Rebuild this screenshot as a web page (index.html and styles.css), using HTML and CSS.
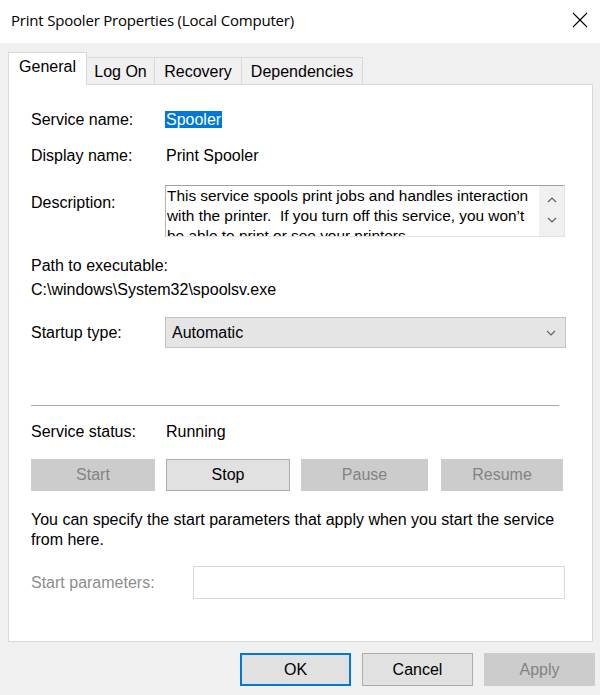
FILE: index.html
```html
<!DOCTYPE html>
<html lang="en">
<head>
  <meta charset="UTF-8">
  <title>Print Spooler Properties (Local Computer)</title>
  <link rel="stylesheet" href="styles.css">
</head>
<body>
  <div class="dialog">
    <div class="titlebar">
      <span class="title">Print Spooler Properties (Local Computer)</span>
      <svg class="close" width="16" height="16" viewBox="0 0 16 16">
        <path d="M1 1 L15 15 M15 1 L1 15" stroke="#000" stroke-width="1.1" fill="none"/>
      </svg>
    </div>

    <div class="tabs">
      <div class="tab active">General</div>
      <div class="tab">Log On</div>
      <div class="tab">Recovery</div>
      <div class="tab">Dependencies</div>
    </div>

    <div class="panel">
      <div class="row first">
        <span class="label">Service name:</span>
        <span class="value"><span class="selected">Spooler</span></span>
      </div>

      <div class="row gap-16">
        <span class="label">Display name:</span>
        <span class="value">Print Spooler</span>
      </div>

      <div class="row top gap-19">
        <span class="label desc-label">Description:</span>
        <div class="textbox">
          <div class="textbox-text">
            This service spools print jobs and handles interaction<br>
            with the printer.&nbsp; If you turn off this service, you won’t<br>
            be able to print or see your printers.
          </div>
          <div class="scrollbar">
            <svg width="10" height="6" viewBox="0 0 10 6"><path d="M1 5 L5 1 L9 5" stroke="#606060" stroke-width="1.2" fill="none"/></svg>
            <svg width="10" height="6" viewBox="0 0 10 6"><path d="M1 1 L5 5 L9 1" stroke="#606060" stroke-width="1.2" fill="none"/></svg>
          </div>
        </div>
      </div>

      <div class="line gap-19">Path to executable:</div>
      <div class="line gap-4">C:\windows\System32\spoolsv.exe</div>

      <div class="row gap-17">
        <span class="label">Startup type:</span>
        <div class="select">
          <span>Automatic</span>
          <svg width="10" height="6" viewBox="0 0 10 6"><path d="M1 1 L5 5 L9 1" stroke="#606060" stroke-width="1.1" fill="none"/></svg>
        </div>
      </div>

      <div class="separator"></div>

      <div class="row gap-16">
        <span class="label">Service status:</span>
        <span class="value">Running</span>
      </div>

      <div class="service-buttons">
        <button class="btn disabled">Start</button>
        <button class="btn">Stop</button>
        <button class="btn disabled">Pause</button>
        <button class="btn disabled resume">Resume</button>
      </div>

      <p class="hint">You can specify the start parameters that apply when you start the service<br>from here.</p>

      <div class="row params">
        <span class="label label-wide muted">Start parameters:</span>
        <div class="input"></div>
      </div>
    </div>

    <div class="footer">
      <button class="btn footer-btn default">OK</button>
      <button class="btn footer-btn">Cancel</button>
      <button class="btn footer-btn disabled">Apply</button>
    </div>
  </div>
</body>
</html>
```

FILE: styles.css
```css
* {
  margin: 0;
  padding: 0;
  box-sizing: border-box;
}

body {
  width: 600px;
  height: 695px;
  overflow: hidden;
  background: #f0f0f0;
  font-family: "Liberation Sans", Arial, sans-serif;
  font-size: 16px;
  color: #000;
}

.titlebar {
  height: 43px;
  background: #fff;
  display: flex;
  align-items: center;
  justify-content: space-between;
  padding: 0 12px 3px 11px;
}

.title {
  font-family: "Open Sans", "Noto Sans", sans-serif;
  font-size: 15px;
  letter-spacing: -0.2px;
}

.tabs {
  display: flex;
  align-items: flex-end;
  height: 41px;
  padding-left: 8px;
  position: relative;
  z-index: 1;
}

.tab {
  height: 27px;
  line-height: 27px;
  border: 1px solid #d9d9d9;
  border-bottom: none;
  border-left: none;
  background: #f0f0f0;
  text-align: center;
}

.tab.active {
  width: 79px;
  height: 33px;
  line-height: 28px;
  border-left: 1px solid #d9d9d9;
  background: #fff;
  margin-bottom: -1px;
}

.tabs .tab:nth-child(2) { width: 68px; }
.tabs .tab:nth-child(3) { width: 87px; }
.tabs .tab:nth-child(4) { width: 121px; }

.panel {
  width: 585px;
  height: 558px;
  margin-left: 8px;
  background: #fff;
  border: 1px solid #d9d9d9;
  padding: 25px 26px 0 22px;
}

.row {
  display: flex;
  align-items: center;
  line-height: 20px;
}

.row.top {
  align-items: flex-start;
}

.label {
  width: 134px;
  flex-shrink: 0;
}

.label-wide {
  width: 162px;
}

.muted {
  color: #8d8d8d;
}

.value {
  padding-left: 1px;
}

.selected {
  background: #0078d7;
  color: #fff;
  margin-left: -1px;
  padding: 0 1px;
}

.gap-4 { margin-top: 4px; }
.gap-16 { margin-top: 16px; }
.gap-17 { margin-top: 17px; }
.gap-19 { margin-top: 19px; }

.desc-label {
  margin-top: 8px;
}

.textbox {
  width: 400px;
  height: 52px;
  display: flex;
  border-top: 1px solid #a0a0a0;
  border-left: 1px solid #b4b4b4;
  border-right: 1px solid #e3e3e3;
  border-bottom: 1px solid #e3e3e3;
  overflow: hidden;
}

.textbox-text {
  flex: 1;
  padding-left: 1px;
  font-size: 15.4px;
  line-height: 20px;
  white-space: nowrap;
  overflow: hidden;
}

.scrollbar {
  width: 25px;
  background: #f0f0f0;
  display: flex;
  flex-direction: column;
  align-items: center;
  justify-content: space-around;
  padding: 4px 0 6px;
}

.line {
  line-height: 20px;
}

.select {
  width: 401px;
  height: 31px;
  background: #e5e5e5;
  border: 1px solid #c2c2c2;
  display: flex;
  align-items: center;
  justify-content: space-between;
  padding: 0 9px 0 6px;
}

.separator {
  height: 1px;
  width: 528px;
  background: #a9a9a9;
  margin-top: 57px;
}

.service-buttons {
  display: grid;
  grid-template-columns: 124px 124px 127px 124px;
  column-gap: 11px;
  margin-top: 17px;
}

.service-buttons .resume {
  margin-left: 2px;
}

.btn {
  height: 32px;
  font-family: inherit;
  font-size: 16px;
  color: #000;
  background: #e1e1e1;
  border: 1px solid #adadad;
}

.btn.disabled {
  background: #cccccc;
  border-color: #cccccc;
  color: #838383;
}

.hint {
  margin-top: 19px;
  line-height: 20px;
}

.params {
  margin-top: 16px;
}

.input {
  width: 372px;
  height: 33px;
  border: 1px solid #d9d9d9;
  background: #fff;
}

.footer {
  display: flex;
  justify-content: flex-end;
  gap: 11px;
  padding: 11px 5px 0 0;
}

.footer-btn {
  width: 111px;
  height: 33px;
}

.footer-btn.default {
  border: 2px solid #0078d7;
}
```
